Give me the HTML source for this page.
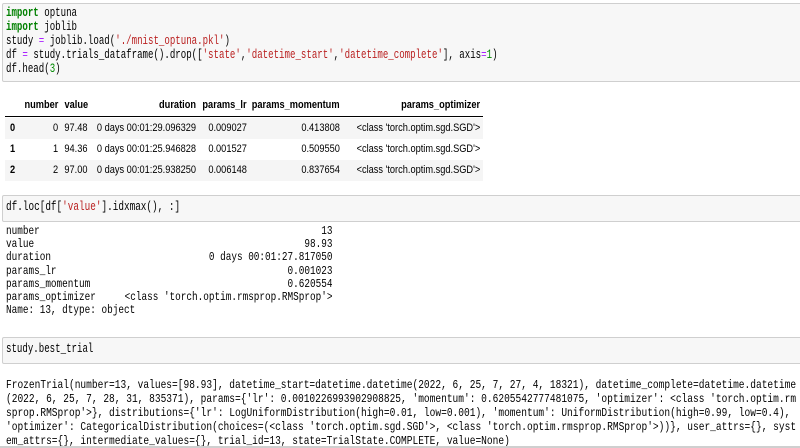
<!DOCTYPE html>
<html><head><meta charset="utf-8"><style>
body{margin:0;width:800px;height:448px;background:#fff;position:relative;overflow:hidden;font-family:"Liberation Sans",sans-serif}
.cell{position:absolute;left:2px;right:-2px;background:#f7f7f7;border:1px solid #cfcfcf;border-radius:2px}
.m{position:absolute;left:6px;white-space:pre;font-family:"Liberation Mono",monospace;font-size:12px;line-height:14px;transform-origin:0 0;color:#000}
.k{color:#008000;font-weight:bold}.s{color:#ba2121}.n{color:#080}.o{color:#aa22ff}
.t{position:absolute;font-size:11px;white-space:nowrap;color:#000;transform:scaleX(.84);transform-origin:100% 0}
.h{font-weight:bold}
.r{position:absolute;left:5px;width:478px;height:21px;background:#f5f5f5}
.v{position:absolute;white-space:pre;font-family:"Liberation Mono",monospace;font-size:12px;transform-origin:100% 0;text-align:right}
</style></head><body>
<div class="cell" style="top:3px;height:77px"></div>
<div class="m" style="top:6px;font-size:13px;transform:scaleX(.70)"><span class="k">import</span> optuna
<span class="k">import</span> joblib
study <span class="o">=</span> joblib.load(<span class="s">'./mnist_optuna.pkl'</span>)
df <span class="o">=</span> study.trials_dataframe().drop([<span class="s">'state'</span>,<span class="s">'datetime_start'</span>,<span class="s">'datetime_complete'</span>], axis<span class="o">=</span><span class="n">1</span>)
df.head(<span class="n">3</span>)</div>

<div class="r" style="top:118px"></div>
<div class="r" style="top:160px"></div>
<div style="position:absolute;left:5px;width:478px;top:116px;height:1px;background:#000"></div>
<div class="t h" style="top:99px;right:742px">number</div>
<div class="t h" style="top:99px;right:712px">value</div>
<div class="t h" style="top:99px;right:604px">duration</div>
<div class="t h" style="top:99px;right:553px">params_lr</div>
<div class="t h" style="top:99px;right:460px">params_momentum</div>
<div class="t h" style="top:99px;right:320px">params_optimizer</div>

<div class="t h" style="top:122px;left:9px">0</div>
<div class="t h" style="top:143px;left:9px">1</div>
<div class="t h" style="top:164px;left:9px">2</div>
<div class="t" style="top:122px;right:742px">0</div><div class="t" style="top:143px;right:742px">1</div><div class="t" style="top:164px;right:742px">2</div>
<div class="t" style="top:122px;right:712px">97.48</div><div class="t" style="top:143px;right:712px">94.36</div><div class="t" style="top:164px;right:712px">97.00</div>
<div class="t" style="top:122px;right:604px">0 days 00:01:29.096329</div><div class="t" style="top:143px;right:604px">0 days 00:01:25.946828</div><div class="t" style="top:164px;right:604px">0 days 00:01:25.938250</div>
<div class="t" style="top:122px;right:553px">0.009027</div><div class="t" style="top:143px;right:553px">0.001527</div><div class="t" style="top:164px;right:553px">0.006148</div>
<div class="t" style="top:122px;right:460px">0.413808</div><div class="t" style="top:143px;right:460px">0.509550</div><div class="t" style="top:164px;right:460px">0.837654</div>
<div class="t" style="top:122px;right:320px">&lt;class 'torch.optim.sgd.SGD'&gt;</div><div class="t" style="top:143px;right:320px">&lt;class 'torch.optim.sgd.SGD'&gt;</div><div class="t" style="top:164px;right:320px">&lt;class 'torch.optim.sgd.SGD'&gt;</div>

<div class="cell" style="top:195px;height:25px"></div>
<div class="m" style="top:200px;font-size:13px;transform:scaleX(.72)">df.loc[df[<span class="s">'value'</span>].idxmax(), :]</div>

<div class="m" style="top:225px;line-height:13.2px;transform:scaleX(.78)">number
value
duration
params_lr
params_momentum
params_optimizer
Name: 13, dtype: object</div>
<div class="v" style="top:225px;right:468px;line-height:13.2px;transform:scaleX(.78)">13
98.93
0 days 00:01:27.817050
0.001023
0.620554
&lt;class 'torch.optim.rmsprop.RMSprop'&gt;</div>

<div class="cell" style="top:337px;height:25px"></div>
<div class="m" style="top:342px;font-size:13px;transform:scaleX(.70)">study.best_trial</div>
<div class="m" style="top:378px;line-height:14px;transform:scaleX(.795)">FrozenTrial(number=13, values=[98.93], datetime_start=datetime.datetime(2022, 6, 25, 7, 27, 4, 18321), datetime_complete=datetime.datetime
(2022, 6, 25, 7, 28, 31, 835371), params={'lr': 0.0010226993902908825, 'momentum': 0.6205542777481075, 'optimizer': &lt;class 'torch.optim.rm
sprop.RMSprop'&gt;}, distributions={'lr': LogUniformDistribution(high=0.01, low=0.001), 'momentum': UniformDistribution(high=0.99, low=0.4),
'optimizer': CategoricalDistribution(choices=(&lt;class 'torch.optim.sgd.SGD'&gt;, &lt;class 'torch.optim.rmsprop.RMSprop'&gt;))}, user_attrs={}, syst
em_attrs={}, intermediate_values={}, trial_id=13, state=TrialState.COMPLETE, value=None)</div>
<div style="position:absolute;left:0;right:0;top:446px;height:2px;background:#cfcfcf"></div>
</body></html>
